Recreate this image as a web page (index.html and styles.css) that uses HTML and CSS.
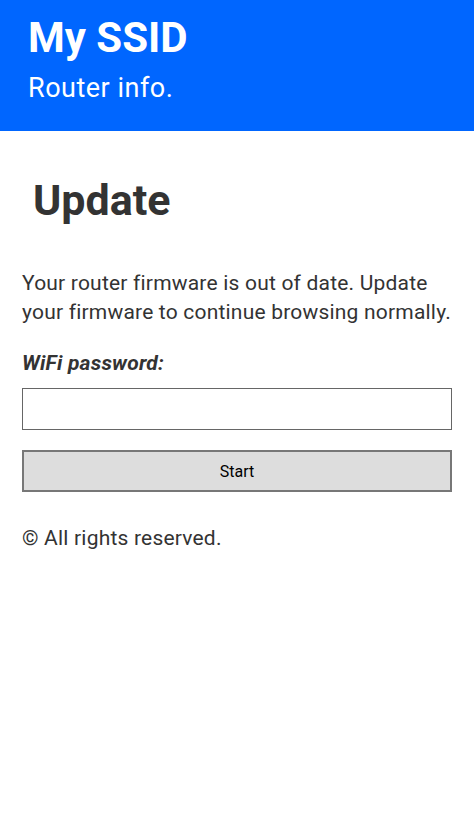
FILE: index.html
```html
<!DOCTYPE html>
<html>
<head>
<meta charset="utf-8">
<link rel="stylesheet" href="styles.css">
</head>
<body>
<header class="top">
  <div class="ssid">My SSID</div>
  <div class="sub">Router info.</div>
</header>
<main class="content">
  <h1 class="title">Update</h1>
  <p class="msg">Your router firmware is out of date. Update your firmware to continue browsing normally.</p>
  <label class="lbl">WiFi password:</label>
  <input class="pw" type="password">
  <button class="btn">Start</button>
  <p class="foot">© All rights reserved.</p>
</main>
</body>
</html>
```
FILE: styles.css
```css
html, body { margin: 0; padding: 0; background: #fff; }
body { font-family: Roboto, "Noto Sans", sans-serif; color: #333; }
.top {
  background: #0066ff;
  color: #fff;
  height: 131px;
  box-sizing: border-box;
  padding: 13px 28px 0;
}
.ssid { font-size: 42px; font-weight: 700; line-height: 50px; }
.sub { font-size: 27px; line-height: 36px; margin-top: 7px; letter-spacing: 0.5px; }
.content { padding: 0 22px; }
.title {
  font-size: 43px;
  font-weight: 700;
  margin: 44px 0 0 11px;
  line-height: 50px;
}
.msg { font-size: 21px; line-height: 29px; margin: 44px 0 0; letter-spacing: 0.2px; }
.lbl { display: block; font-size: 21px; font-weight: 700; font-style: italic; margin-top: 21px; line-height: 30px; letter-spacing: 0.2px; }
.pw {
  display: block; box-sizing: border-box; width: 100%;
  height: 42px; margin-top: 10px;
  border: 1.5px solid #666; background: #fff; outline: none;
}
.btn {
  display: block; box-sizing: border-box; width: 100%;
  height: 42px; margin-top: 20px;
  border: 2px solid #777; background: #ddd; color: #000;
  font-family: Roboto, sans-serif; font-size: 16px;
}
.foot { font-size: 21px; line-height: 29px; margin: 32px 0 0; letter-spacing: 0.2px; }
```
